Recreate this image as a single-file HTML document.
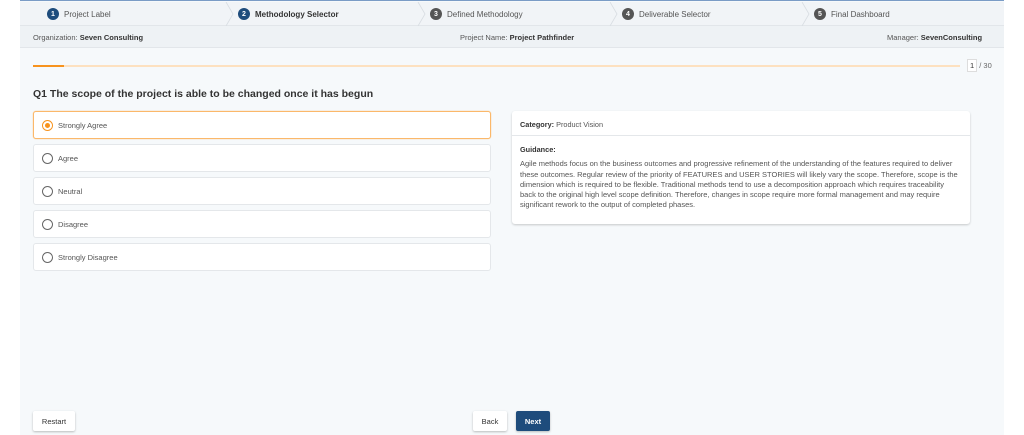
<!DOCTYPE html>
<html><head><style>
*{box-sizing:border-box;margin:0;padding:0}
body{width:1024px;height:435px;background:#fff;font-family:"Liberation Sans",sans-serif;overflow:hidden;position:relative}
#main{position:absolute;left:20px;top:0;width:984px;height:435px;background:#f6f9fb;border-top:1px solid #7a9cc6}
.steps{position:absolute;left:0;top:1px;width:984px;height:24px;background:#f1f4f7;border-bottom:1px solid #e2e6ea}
.step{position:absolute;top:0;height:24px;font-size:8px;color:#555;display:flex;align-items:center}
.step .n{width:12px;height:12px;border-radius:50%;background:#555;color:#fff;font-size:7px;font-weight:bold;display:flex;align-items:center;justify-content:center;margin-right:5px}
.step .n.b{background:#1e4c7c}
.chev{position:absolute;top:0;width:10px;height:24px}
.info{position:absolute;left:0;top:25px;width:984px;height:22px;background:#eef2f5;border-bottom:1px solid #e2e6ea;font-size:7.5px;color:#555}
.info span{position:absolute;top:7px}
.info b{color:#333}
.prog{position:absolute;left:13px;top:64px;width:927px;height:2px;background:#fde1c0}
.prog i{position:absolute;left:0;top:0;width:31px;height:2px;background:#f7931e}
.cnt{position:absolute;left:947px;top:60px;font-size:7.5px;color:#666}
.cnt span{border:1px solid #ddd;background:#fff;padding:1px 2px;color:#333}
h1{position:absolute;left:13px;top:87px;font-size:10.5px;font-weight:bold;color:#333}
.opt{position:absolute;left:13px;width:458px;height:28px;background:#fff;border:1px solid #e4e7ea;border-radius:3px;font-size:7.5px;color:#555;display:flex;align-items:center;padding-left:8px}
.opt.s{border-color:#fbb86a;box-shadow:0 0 1px #fbb86a}
.r{width:11px;height:11px;border:1.2px solid #666;border-radius:50%;margin-right:5px;position:relative}
.opt.s .r{border-color:#f7931e}
.opt.s .r:after{content:"";position:absolute;left:2px;top:2px;width:5px;height:5px;border-radius:50%;background:#f7931e}
.card{position:absolute;left:492px;top:110px;width:458px;height:113px;background:#fff;border-radius:3px;box-shadow:0 1px 2px rgba(0,0,0,.2);font-size:7.3px;color:#555}
.card .h{height:25px;border-bottom:1px solid #e4e7ea;padding:9px 8px 0}
.card b{color:#333}
.card .g{padding:9px 8px 0;line-height:10.3px;white-space:nowrap}
.card .g div{font-size:7.5px}
.btn{position:absolute;top:410px;height:20px;background:#fff;box-shadow:0 1px 2px rgba(0,0,0,.25);border-radius:2px;font-size:7.5px;color:#333;display:flex;align-items:center;justify-content:center}
</style></head><body>
<div id="main">
<div class="steps">
<div class="step" style="left:27px"><span class="n b">1</span>Project Label</div>
<svg class="chev" style="left:205px" viewBox="0 0 10 24"><path d="M1 0L8 12L1 24" fill="none" stroke="#d8dde2" stroke-width="0.8"/></svg>
<div class="step" style="left:218px;color:#333;font-weight:bold"><span class="n b">2</span>Methodology Selector</div>
<svg class="chev" style="left:397px" viewBox="0 0 10 24"><path d="M1 0L8 12L1 24" fill="none" stroke="#d8dde2" stroke-width="0.8"/></svg>
<div class="step" style="left:410px"><span class="n">3</span>Defined Methodology</div>
<svg class="chev" style="left:589px" viewBox="0 0 10 24"><path d="M1 0L8 12L1 24" fill="none" stroke="#d8dde2" stroke-width="0.8"/></svg>
<div class="step" style="left:602px"><span class="n">4</span>Deliverable Selector</div>
<svg class="chev" style="left:781px" viewBox="0 0 10 24"><path d="M1 0L8 12L1 24" fill="none" stroke="#d8dde2" stroke-width="0.8"/></svg>
<div class="step" style="left:794px"><span class="n">5</span>Final Dashboard</div>
</div>
<div class="info"><span style="left:13px">Organization: <b>Seven Consulting</b></span><span style="left:440px">Project Name: <b>Project Pathfinder</b></span><span style="left:867px">Manager: <b>SevenConsulting</b></span></div>
<div class="prog"><i></i></div>
<div class="cnt"><span>1</span> / 30</div>
<h1>Q1 The scope of the project is able to be changed once it has begun</h1>
<div class="opt s" style="top:110px"><span class="r"></span>Strongly Agree</div>
<div class="opt" style="top:143px"><span class="r"></span>Agree</div>
<div class="opt" style="top:176px"><span class="r"></span>Neutral</div>
<div class="opt" style="top:209px"><span class="r"></span>Disagree</div>
<div class="opt" style="top:242px"><span class="r"></span>Strongly Disagree</div>
<div class="card"><div class="h"><b>Category:</b> Product Vision</div>
<div class="g"><b>Guidance:</b><div style="margin-top:4px">Agile methods focus on the business outcomes and progressive refinement of the understanding of the features required to deliver<br>these outcomes. Regular review of the priority of FEATURES and USER STORIES will likely vary the scope. Therefore, scope is the<br>dimension which is required to be flexible. Traditional methods tend to use a decomposition approach which requires traceability<br>back to the original high level scope definition. Therefore, changes in scope require more formal management and may require<br>significant rework to the output of completed phases.</div></div></div>
<div class="btn" style="left:13px;width:42px">Restart</div>
<div class="btn" style="left:453px;width:34px">Back</div>
<div class="btn" style="left:496px;width:34px;background:#1e4c7c;color:#fff;font-weight:bold">Next</div>
</div>
</body></html>
